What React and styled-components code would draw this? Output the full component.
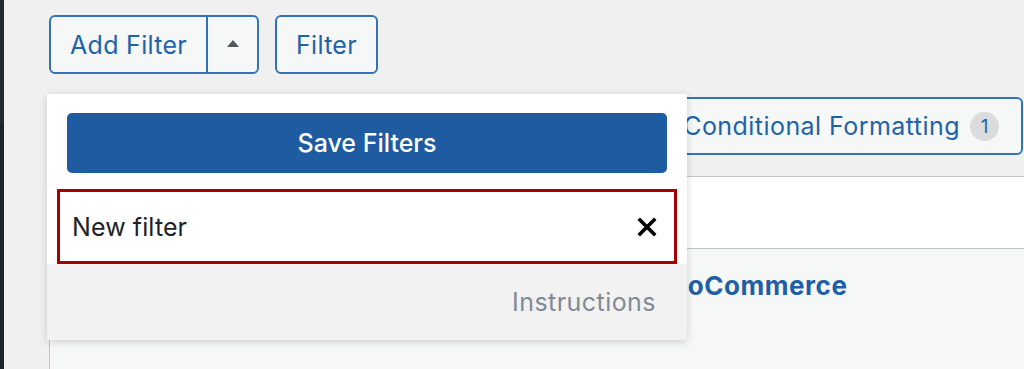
import styled, { createGlobalStyle } from 'styled-components';

const GlobalStyle = createGlobalStyle`
  * { box-sizing: border-box; }
  html, body { margin: 0; padding: 0; }
  body {
    background: #f0f0f1;
    font-family: Inter, "Noto Sans", "Liberation Sans", sans-serif;
    overflow: hidden;
  }
`;

const Page = styled.div`
  display: flex;
  height: 100vh;
  background: #f0f0f1;
`;

const AdminMenu = styled.div`
  width: 4px;
  flex-shrink: 0;
  background: linear-gradient(#23282d 0 125px, #1d2327 125px);
`;

const Main = styled.div`
  position: relative;
  display: flex;
  flex-direction: column;
  flex: 1;
  padding: 15px 1px 0 45px;
`;

const Toolbar = styled.div`
  display: flex;
  gap: 16px;
`;

const ButtonBase = styled.button`
  display: flex;
  align-items: center;
  height: 59px;
  padding: 0 19px;
  background: #f6f7f7;
  border: 2px solid #3273b6;
  border-radius: 6px;
  color: #2063a9;
  font-family: inherit;
  font-size: 25px;
  letter-spacing: 0.3px;
  font-weight: 400;
`;

const SplitButton = styled.div`
  display: flex;
  height: 59px;
  border: 2px solid #3273b6;
  border-radius: 6px;
  background: #f6f7f7;
  overflow: hidden;
`;

const SplitMain = styled.span`
  display: flex;
  align-items: center;
  width: 155px;
  padding-left: 19px;
  color: #2063a9;
  font-size: 25px;
  letter-spacing: 0.3px;
`;

const SplitToggle = styled.span`
  display: flex;
  align-items: center;
  justify-content: center;
  width: 51px;
  border-left: 2px solid #3273b6;
`;

const Caret = styled.span`
  width: 0;
  height: 0;
  border-left: 6px solid transparent;
  border-right: 6px solid transparent;
  border-bottom: 7px solid #50575e;
  margin-top: -2px;
`;

const ActionsRow = styled.div`
  display: flex;
  justify-content: flex-end;
  margin-top: 23px;
`;

const FormatButton = styled(ButtonBase)`
  height: 58px;
  gap: 10px;
  padding: 0 22px 0 22px;
  letter-spacing: 0.45px;
`;

const Badge = styled.span`
  display: inline-flex;
  align-items: center;
  justify-content: center;
  width: 29px;
  height: 29px;
  border-radius: 50%;
  background: #dcdcde;
  color: #2063a9;
  font-size: 19px;
  letter-spacing: 0;
`;

const Table = styled.div`
  display: flex;
  flex-direction: column;
  flex: 1;
  margin-top: 21px;
  margin-right: -1px;
  border-left: 1px solid #c3c4c7;
  border-top: 1px solid #c3c4c7;
`;

const TableHead = styled.div`
  height: 72px;
  background: #fff;
  border-bottom: 1px solid #c3c4c7;
`;

const TableRow = styled.div`
  display: grid;
  grid-template-columns: 595px 1fr;
  align-content: start;
  flex: 1;
  padding-top: 21px;
  background: #f6f7f7;
`;

const RowTitle = styled.a`
  color: #1f5fa6;
  font-size: 26px;
  font-weight: 700;
  letter-spacing: 0.55px;
  text-decoration: none;
`;

const Dropdown = styled.div`
  position: absolute;
  top: 94px;
  left: 47px;
  width: 640px;
  background: #fff;
  box-shadow: 0 2px 8px rgba(0, 0, 0, 0.16);
  z-index: 2;
`;

const DropdownBody = styled.div`
  display: flex;
  flex-direction: column;
  gap: 16px;
  padding: 19px 10px 0;
`;

const SaveButton = styled.button`
  height: 60px;
  margin: 0 10px;
  border: none;
  border-radius: 5px;
  background: #1e5ba1;
  color: #fff;
  font-family: inherit;
  font-size: 25px;
  font-weight: 500;
`;

const FilterInput = styled.div`
  display: flex;
  align-items: center;
  justify-content: space-between;
  height: 75px;
  padding: 0 17px 0 12px;
  border: 3px solid #a80000;
  color: #1d2327;
  font-size: 25px;
  letter-spacing: 0.1px;
`;

const ClearIcon = styled.svg`
  width: 20px;
  height: 20px;
`;

const DropdownFooter = styled.div`
  display: flex;
  align-items: center;
  justify-content: flex-end;
  height: 76px;
  padding-right: 31px;
  background: #f2f2f2;
  color: #7f8b95;
  font-size: 25px;
  letter-spacing: 0.45px;
`;

export default function App() {
  return (
    <>
      <GlobalStyle />
      <Page>
        <AdminMenu />
        <Main>
          <Toolbar>
            <SplitButton>
              <SplitMain>Add Filter</SplitMain>
              <SplitToggle><Caret /></SplitToggle>
            </SplitButton>
            <ButtonBase>Filter</ButtonBase>
          </Toolbar>
          <ActionsRow>
            <FormatButton>
              Conditional Formatting <Badge>1</Badge>
            </FormatButton>
          </ActionsRow>
          <Table>
            <TableHead />
            <TableRow>
              <span />
              <RowTitle>WooCommerce</RowTitle>
            </TableRow>
          </Table>
        </Main>
        <Dropdown>
          <DropdownBody>
            <SaveButton>Save Filters</SaveButton>
            <FilterInput>
              New filter
              <ClearIcon viewBox="0 0 20 20">
                <path d="M3 3 L17 17 M17 3 L3 17" stroke="#000" strokeWidth="3.6" strokeLinecap="square" />
              </ClearIcon>
            </FilterInput>
          </DropdownBody>
          <DropdownFooter>Instructions</DropdownFooter>
        </Dropdown>
      </Page>
    </>
  );
}
